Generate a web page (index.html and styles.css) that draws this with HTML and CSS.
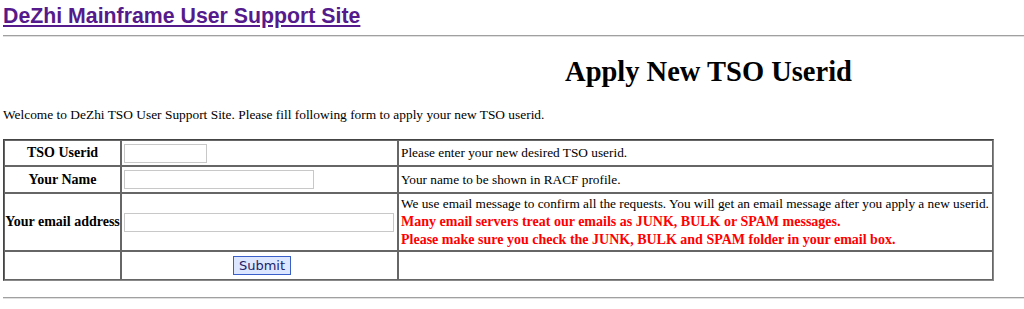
FILE: index.html
```html
<!DOCTYPE html>
<html lang="en">
  <head>
    <meta charset="UTF-8" />
    <title>Apply New TSO Userid</title>
    <link rel="stylesheet" href="styles.css">
  </head>
  <body>
    <div class="page">
      <a class="site-title" href="#">DeZhi Mainframe User Support Site</a>
      <hr>
      <h1>Apply New TSO Userid</h1>
      <p class="welcome">Welcome to DeZhi TSO User Support Site. Please fill following form to apply your new TSO userid.</p>
      <form>
        <table class="apply">
          <tr class="row-1">
            <th class="label">TSO Userid</th>
            <td class="field"><input type="text" class="userid"></td>
            <td class="note">Please enter your new desired TSO userid.</td>
          </tr>
          <tr class="row-2">
            <th class="label">Your Name</th>
            <td class="field"><input type="text" class="name"></td>
            <td class="note">Your name to be shown in RACF profile.</td>
          </tr>
          <tr class="row-3">
            <th class="label">Your email address</th>
            <td class="field"><input type="text" class="email"></td>
            <td class="note top">
              We use email message to confirm all the requests. You will get an email message after you apply a new userid.<br>
              <b class="warn">Many email servers treat our emails as JUNK, BULK or SPAM messages.</b><br>
              <b class="warn">Please make sure you check the JUNK, BULK and SPAM folder in your email box.</b>
            </td>
          </tr>
          <tr class="row-4">
            <td class="label"></td>
            <td class="field center"><input type="submit" value="Submit" class="submit"></td>
            <td class="note"></td>
          </tr>
        </table>
      </form>
      <hr class="bottom">
    </div>
  </body>
</html>
```

FILE: styles.css
```css
html {
    overflow: hidden;
}

body {
    margin: 0;
    background: #fff;
    color: #000;
    font-family: "Liberation Serif", "Times New Roman", serif;
    font-size: 13.4px;
}

.page {
    width: 1411px;
    padding: 0 3px;
}

.site-title {
    display: inline-block;
    margin-top: 5px;
    font-family: "Liberation Sans", Arial, sans-serif;
    font-size: 21.3px;
    font-weight: bold;
    color: #551a8b;
    line-height: 23px;
}

hr {
    margin: 7px 0 0 0;
    border: 0;
    border-top: 1px solid #a0a0a0;
    border-bottom: 1px solid #e0e0e0;
    height: 0;
}

h1 {
    text-align: center;
    font-size: 28.5px;
    margin: 19px 0 0 0;
    line-height: 32px;
}

.welcome {
    margin: 19px 0 0 0;
    line-height: 16px;
}

form {
    margin: 16px 0 0 0;
}

.apply {
    width: 991px;
    border-spacing: 0;
    border: 1px solid #444;
    border-right-color: #888;
    border-bottom-color: #888;
}

.apply th,
.apply td {
    border: 1px solid #666;
    padding: 1px;
    line-height: 18px;
}

.apply .label {
    width: 115px;
    padding: 1px 0;
    font-size: 14px;
    font-weight: bold;
    text-align: center;
    white-space: nowrap;
}

.field {
    width: 273px;
}

.center {
    text-align: center;
}

.top {
    vertical-align: top;
}

.row-1 > * {
    height: 22px;
}

.row-2 > * {
    height: 23px;
}

.row-4 > * {
    height: 25px;
}

input[type='text'] {
    box-sizing: border-box;
    height: 19px;
    margin: 0 0 0 1px;
    border: 1px solid #c8c8c8;
    padding: 0 2px;
    font-size: 13px;
    display: block;
}

.userid {
    width: 83px;
}

.name {
    width: 190px;
}

.email {
    width: 270px;
}

.apply .note {
    padding-left: 2px;
    font-size: 13.3px;
    white-space: nowrap;
}

.warn {
    font-size: 14px;
    color: #ff0000;
}

.submit {
    font-family: "DejaVu Sans", Tahoma, sans-serif;
    font-size: 13px;
    color: #222266;
    background: #dde6ff;
    border: 1px solid #3a5fc8;
    padding: 0 5px;
    height: 19px;
    margin-left: 5px;
}

.bottom {
    margin-top: 16px;
}
```
